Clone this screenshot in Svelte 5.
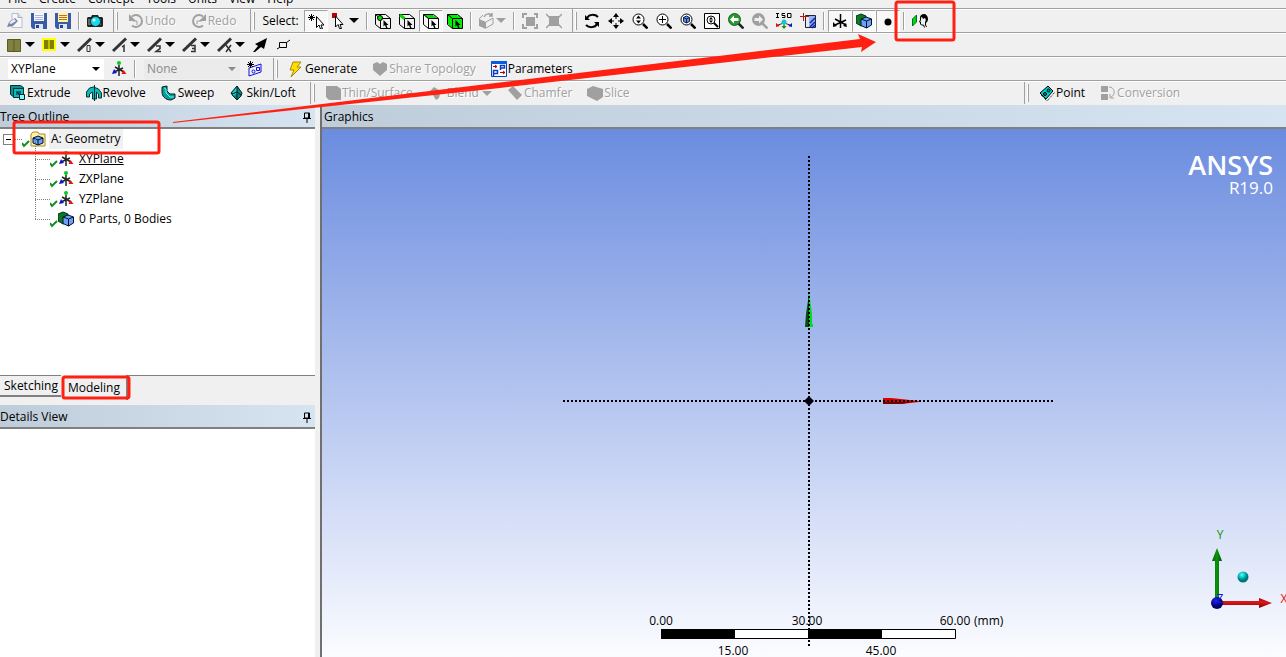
<script lang="ts">
	type Tool = {
		icon?: string;
		label?: string;
		title?: string;
		disabled?: boolean;
		pressed?: boolean;
		menu?: boolean;
		sep?: boolean;
	};

	const menus = ['File', 'Create', 'Concept', 'Tools', 'Units', 'View', 'Help'];
	const sep: Tool = { sep: true };

	const fileTools: Tool[] = [
		{ icon: 'newSketch', title: 'New' },
		{ icon: 'save', title: 'Save' },
		{ icon: 'saveAs', title: 'Save As' },
		sep,
		{ icon: 'camera', title: 'Capture image' }
	];
	const historyTools: Tool[] = [
		{ icon: 'undo', label: 'Undo', disabled: true },
		{ icon: 'redo', label: 'Redo', disabled: true }
	];
	const selectTools: Tool[] = [
		{ icon: 'pick', title: 'New selection', pressed: true },
		{ icon: 'pickMode', title: 'Select mode', menu: true },
		sep,
		{ icon: 'vertex', title: 'Points' },
		{ icon: 'edge', title: 'Edges' },
		{ icon: 'face', title: 'Faces', pressed: true },
		{ icon: 'body', title: 'Bodies' },
		sep,
		{ icon: 'extend', title: 'Extend selection', menu: true, disabled: true },
		sep,
		{ icon: 'expand', title: 'Expand', disabled: true },
		{ icon: 'shrink', title: 'Shrink', disabled: true }
	];
	const viewTools: Tool[] = [
		{ icon: 'rotate', title: 'Rotate' },
		{ icon: 'pan', title: 'Pan' },
		{ icon: 'zoom', title: 'Zoom' },
		{ icon: 'zoomIn', title: 'Box zoom' },
		{ icon: 'zoomFit', title: 'Zoom to fit' },
		{ icon: 'magnifier', title: 'Magnifier window' },
		{ icon: 'prevView', title: 'Previous view' },
		{ icon: 'nextView', title: 'Next view', disabled: true },
		{ icon: 'iso', title: 'Isometric view' },
		{ icon: 'section', title: 'New section plane' },
		sep,
		{ icon: 'triad', title: 'Display plane', pressed: true },
		{ icon: 'bodies', title: 'Display model', pressed: true },
		{ icon: 'dot', title: 'Display points', pressed: true },
		sep,
		{ icon: 'lookAt', title: 'Look at' }
	];
	const edgeTools: Tool[] = [
		{ icon: 'olive', title: 'Face coloring', menu: true },
		{ icon: 'yellow', title: 'Edge coloring', menu: true },
		...['0', '1', '2', '3', 'x'].map((n) => ({
			icon: 'edge' + n,
			title: `Edge connections ${n}`,
			menu: true
		})),
		{ icon: 'bigArrow', title: 'Edge direction' },
		{ icon: 'vertices', title: 'Display vertices' }
	];
	const generateTools: Tool[] = [
		{ icon: 'bolt', label: 'Generate' },
		{ icon: 'share', label: 'Share Topology', disabled: true },
		{ icon: 'params', label: 'Parameters' }
	];
	const createTools: Tool[] = [
		{ icon: 'extrude', label: 'Extrude' },
		{ icon: 'revolve', label: 'Revolve' },
		{ icon: 'sweep', label: 'Sweep' },
		{ icon: 'loft', label: 'Skin/Loft' }
	];
	const modifyTools: Tool[] = [
		{ icon: 'thin', label: 'Thin/Surface', disabled: true },
		{ icon: 'blend', label: 'Blend', disabled: true, menu: true },
		{ icon: 'chamfer', label: 'Chamfer', disabled: true },
		{ icon: 'slice', label: 'Slice', disabled: true }
	];
	const pointTools: Tool[] = [
		{ icon: 'point', label: 'Point' },
		{ icon: 'convert', label: 'Conversion', disabled: true }
	];
	const planes = ['XYPlane', 'ZXPlane', 'YZPlane'];

	// shared pieces of the 16x16 icons
	const cube = '<path d="M.5 1.500h10l5 4v10h-10l-5-4zM.5 1.500l5 4h10M5.500 5.500v10" fill="none" stroke="#000"/>';
	const cursor = '<path d="M8.500 7v6.500l1.500-1.500 1 3h1.500l-1-3h2z" fill="#000"/>';
	const lens =
		'<circle cx="6.500" cy="6.500" r="5.500" fill="#fff" stroke="#000"/><path d="M11 11l4.500 4.500" stroke="#000" stroke-width="2.500"/>';
	const edgeLine = '<path d="M1 14L14 1.500" stroke="#333" stroke-width="3"/>';
	const axes =
		'<path d="M8 4v11M3 11l9-4M4 6l9 5" stroke="#222" stroke-width="1.500"/><circle cx="8" cy="2" r="2" fill="#0c2"/><path d="M1 13l2-5 3 4z" fill="#11d"/><path d="M15.500 13l-5 0 2-4z" fill="#e11"/>';
	const blueBodies =
		'<path d="M0 3l5-2 5 2v8l-5 2-5-3z" fill="#0a7a1c" stroke="#032"/><path d="M5 6l5-2 5.500 2v6l-5 3L5 12.500z" fill="#6da1f5" stroke="#013"/><path d="M5 6l5.500 2 5-2M10.500 8v7" fill="none" stroke="#013"/>';

	const icons: Record<string, string> = {
		newSketch:
			'<path d="M5 .500h6l4 4v10H5z" fill="#f8f8fb" stroke="#b9bdc8"/><path d="M11 .500v4h4" fill="#dde" stroke="#aab"/><path d="M0 14l2-5 6-4 3 3-5 5z" fill="#7b86a6"/><path d="M2 10l5-4 2 2-5 3z" fill="#eef"/>',
		save: '<path d="M0 0h16v16H2l-2-2z" fill="#3a5ba8"/><path d="M3 0h10v8H3z" fill="#f6f8fc"/><path d="M4 2.500h8M4 4.500h8M4 6.500h8" stroke="#a9b8da"/><path d="M4 11h8v5H4z" fill="#dfe6f3"/><path d="M5 12h3v3H5z" fill="#26448c"/>',
		saveAs:
			'<path d="M0 0h16v16H2l-2-2z" fill="#3a5ba8"/><path d="M3 0h10v9H3z" fill="#fff1a0"/><path d="M4 2.500h8M4 4.500h8M4 6.500h8" stroke="#b9702c"/><path d="M4 11h8v5H4z" fill="#dfe6f3"/><path d="M5 12h3v3H5z" fill="#26448c"/>',
		camera:
			'<path d="M1 4h3l1-2h6l1 2h3l1 1v8l-1 1H1l-1-1V5z" fill="#222"/><path d="M2 6v6M4 6v6M13 6v6" stroke="#aaa"/><circle cx="8.500" cy="8.500" r="5" fill="#1bd9ea" stroke="#033"/><circle cx="7" cy="7" r="1.500" fill="#dff"/>',
		undo: '<path d="M4 3.500a6 6 0 1 1 0 9" fill="none" stroke="#a0a0a0" stroke-width="2"/><path d="M1 1v7h7z" fill="#a0a0a0"/><path d="M5 8h4v4" fill="none" stroke="#a0a0a0"/>',
		redo: '<path d="M12 3.500a6 6 0 1 0 0 9" fill="none" stroke="#a0a0a0" stroke-width="2"/><path d="M15 1v7H8z" fill="#a0a0a0"/><path d="M6 11V8h5" fill="none" stroke="#a0a0a0"/>',
		pick: '<path d="M3.500 1v7M0 4.500h7M1 2l5 5M6 2L1 7" stroke="#000"/><path d="M8.500 3.500v11l2.500-2.500 1.500 4h2l-1.500-4h3z" fill="#fff" stroke="#000"/>',
		pickMode:
			'<path d="M1 0h5v5H1z" fill="#b00"/><path d="M4.500 3v11L7 11.500 8.500 15.500h2L9 11.500h3z" fill="#fff" stroke="#000"/>',
		vertex: cube + '<circle cx="5" cy="5" r="2.500" fill="#0d0" stroke="#000"/>' + cursor,
		edge: cube + '<path d="M1 2l4.500 3.500" stroke="#0d0" stroke-width="3"/>' + cursor,
		face: '<path d="M1 2h9l5 4H5z" fill="#0d0"/>' + cube + cursor,
		body: '<path d="M1 2h9l6 4v9H5l-4-4z" fill="#0e0"/>' + cube + cursor,
		extend:
			'<path d="M1 6l7 3v7l-7-3z" fill="#a0a0a0"/><path d="M1 6l4-4M8 9l7-4v6l-7 4" fill="none" stroke="#a0a0a0"/><path d="M6 4c2-4 6-4 8-1M14 0v3h-3" fill="none" stroke="#a0a0a0" stroke-width="1.500"/>',
		expand:
			'<path d="M4 4h9v9H4z" fill="#a0a0a0"/><path d="M1 5V1h4M12 1h3v4M15 11v4h-3M5 15H1v-4" fill="none" stroke="#a0a0a0" stroke-width="2"/>',
		shrink:
			'<path d="M3 3h10v10H3z" fill="#a0a0a0"/><path d="M0 1l4 4M16 1l-4 4M0 15l4-4M16 15l-4-4" stroke="#a0a0a0" stroke-width="1.500"/>',
		rotate:
			'<path d="M3 5c2-4 8-4 11-1M13 11c-2 4-8 4-11 1" fill="none" stroke="#000" stroke-width="2"/><path d="M1 2v5h5zM15 14V9h-5z" fill="#000"/>',
		pan: '<path d="M8 0l3 4H5zM8 16l3-4H5zM0 8l4-3v6zM16 8l-4-3v6z" fill="#000"/><path d="M8 3v3M8 10v3M3 8h3M10 8h3" stroke="#000"/>',
		zoom: lens + '<path d="M6.500 2.500l2.500 3H4zM6.500 10.500L9 7.500H4z" fill="#000"/>',
		zoomIn: lens + '<path d="M6.500 3v7M3 6.500h7" stroke="#000"/>',
		zoomFit:
			lens + '<path d="M3.500 4.500l3-1.500 3 1.500v4l-3 1.500-3-1.500z" fill="#5b8ef0" stroke="#124"/><path d="M3.500 4.500l3 1.500 3-1.500M6.500 6v4" fill="none" stroke="#124"/>',
		magnifier:
			'<path d="M.5.500h15v15H.500z" fill="#fff" stroke="#000"/><circle cx="7" cy="7" r="4" fill="none" stroke="#000"/><path d="M10 10l4 4" stroke="#000" stroke-width="2"/><path d="M7 4l2 2.500H5zM7 10l2-2.500H5z" fill="#000"/>',
		prevView:
			'<path d="M10 10l5.500 5.500" stroke="#222" stroke-width="2.500"/><circle cx="6.500" cy="6.500" r="6" fill="#27962f" stroke="#17661f"/><path d="M2 6.500l4-4V5h4.500v3H6v2.500z" fill="#fff"/>',
		nextView:
			'<path d="M10 10l5.500 5.500" stroke="#a0a0a0" stroke-width="2.500"/><circle cx="6.500" cy="6.500" r="6.500" fill="#a0a0a0"/><path d="M11 6.500l-4-4V5H2.500v3H7v2.500z" fill="#f0f0f0"/>',
		iso: '<path d="M1.500 0v5M0 .500h3M0 4.500h3M9 .500H6v2h3v2H6M11.500.500h3.500v4h-3.500z" fill="none" stroke="#000"/><path d="M8 8v6M8 10l-6 2M8 10l6 2" stroke="#333"/><circle cx="8" cy="9" r="2.500" fill="#19c3cf"/><path d="M0 10v4l4-1z" fill="#d11"/><path d="M16 10v4l-4-1z" fill="#11d"/><path d="M5.500 13h5L8 16z" fill="#090"/>',
		section:
			'<path d="M5.500 2.500h10v12h-10z" fill="#8fb3f5" stroke="#223"/><path d="M6 14V3h3v11z" fill="#e8e8e8"/><path d="M10 14l5-5M10 10l5-5M12 15l3-3" stroke="#12b" stroke-width="1.500"/><path d="M3.500 0v8M0 3.500h9" stroke="#b11"/>',
		triad: '<path d="M8.500 1v14M3 12l11-5M3 6l11 6" stroke="#000" stroke-width="1.500"/><path d="M1 14V9l4 4zM15 14l-4-1 3-3z" fill="#000"/>',
		bodies: blueBodies,
		dot: '<circle cx="8" cy="9" r="3.500" fill="#000"/>',
		lookAt:
			'<path d="M.5 6l4-4v7l-4 4z" fill="#0d0" stroke="#063"/><path d="M8 5c0-3 2-4 4-4s4 2 4 5c0 2-1 3-2 4l-1-1c1-1 1-3 0-4l-2 1-1-2z" fill="#000"/><path d="M8.500 4v3l-1 2h1v2l1 1h2l1 2.500M13.500 9v3l1 2" fill="none" stroke="#000"/>',
		olive:
			'<path d="M.5 2.500h13v12H.500z" fill="#808040" stroke="#5a5a1e"/><path d="M7 3v11" stroke="#5a5a1e"/>',
		yellow:
			'<path d="M1 2h12v11H1z" fill="#808000" stroke="#ff0" stroke-width="2"/><path d="M7 2v11" stroke="#ff0"/>',
		edge0: edgeLine + '<path d="M10 8.500h3v6h-3z" fill="#f0f0f0" stroke="#333"/>',
		edge1: edgeLine + '<path d="M10 10l2-1.500V15" fill="none" stroke="#333" stroke-width="1.500"/>',
		edge2: edgeLine + '<path d="M9 9h4v2.500l-4 3h5" fill="none" stroke="#333" stroke-width="1.500"/>',
		edge3: edgeLine + '<path d="M9 8.500h4v3h-3 3v3H9" fill="none" stroke="#333" stroke-width="1.500"/>',
		edgex: edgeLine + '<path d="M9 8l5 7M14 8l-5 7" stroke="#333" stroke-width="1.500"/>',
		bigArrow: '<path d="M1 15l5-6-3-2L15 1l-3 11-3-2-6 5z" fill="#000"/>',
		vertices:
			'<path d="M3.500 5.500h7v5h-7zM10.500 5.500L14 3M3.500 10.500L1 12" fill="none" stroke="#000"/>',
		axes,
		newPlane:
			'<path d="M2 7l12-4v8L2 15z" fill="none" stroke="#11d"/><circle cx="6.500" cy="10.500" r="1.500" fill="none" stroke="#11d"/><path d="M9.500 6.500h3v3h-3z" fill="none" stroke="#11d"/><path d="M3.500 0v7M0 3.500h7M1 1l5 5M6 1L1 6" stroke="#000"/>',
		bolt: '<path d="M5 1h8L9 6h4L3 16l3-7H2z" fill="#fd0" stroke="#a80"/>',
		share: '<path d="M8 15L1 9V3l4-2 3 2 3-2 4 2v6z" fill="#a0a0a0"/>',
		params:
			'<path d="M.5.500h15v15H.500z" fill="#fff" stroke="#0645b8"/><path d="M0 0h16v3H0z" fill="#0b5be0"/><path d="M2 5.500h4M4 4l2 1.500L4 7M9 11.500h5M12 10l2 1.500L12 13" fill="none" stroke="#b00"/><path d="M9.500 9V4.500h4v2.500h-4M2.500 15V9.500h4v3h-4" fill="none" stroke="#0a3cc8" stroke-width="1.500"/>',
		extrude:
			'<path d="M.5.500h10l3 2v10h-9l-4-3z" fill="#0b8f8f" stroke="#033"/><path d="M3.500 3.500h10v9h-10z" fill="#0cbcbc" stroke="#033"/><path d="M6 6h5v4H6z" fill="#067"/><path d="M9.500 9.500h5v5h-5zM9 9L7 7" fill="#7ff" stroke="#022"/>',
		revolve:
			'<path d="M.5 12V7l3-4 4-1 5 2 3 4v5h-3V9l-2-2v7h-4V7l-3 2v3z" fill="#0cbcbc" stroke="#033"/><path d="M8.500 0v16" stroke="#033"/>',
		sweep:
			'<path d="M1 2l5-1v5l3 3h5v4l-4 2c-6 0-9-4-9-8z" fill="#0b9c94" stroke="#022"/><path d="M3 3l2 1v4l4 4h4" fill="none" stroke="#5ff"/>',
		loft: '<path d="M8 1l5 7-1 3-4 4-4-4-2-3z" fill="#0b857f" stroke="#022"/><path d="M8 2v6l-3 3-2-3z" fill="#2cc"/><path d="M8 1v13M3 9l5-2 4 3" fill="none" stroke="#022"/>',
		thin: '<path d="M1 1h11l4 3v11H4l-3-3z" fill="#a0a0a0"/>',
		blend: '<path d="M1 7l5-5 8 5-2 2-1 4-3 2-3-5z" fill="#a0a0a0"/>',
		chamfer: '<path d="M1 5l5-4 9 9-5 5z" fill="#a0a0a0"/>',
		slice: '<path d="M0 4l6-3 10 3v8l-6 4-10-5z" fill="#a0a0a0"/>',
		point:
			'<path d="M1 8l8-7 5 5-7 8z" fill="#0cc" stroke="#000"/><path d="M2 10l6 6 8-9" fill="none" stroke="#000" stroke-dasharray="1 1"/><circle cx="6" cy="9" r="1.500" stroke="#000" fill="#099"/><circle cx="9.500" cy="5.500" r="1.500" stroke="#000" fill="#099"/>',
		convert:
			'<path d="M1 1h7v6H1zM1 9h7v6H1z" fill="#a0a0a0"/><path d="M9 2c6 0 7 8 2 10M10 9v4h4" fill="none" stroke="#a0a0a0"/>',
		folder:
			'<path d="M1 3l2-2h5l1 2h6v12H1z" fill="#fff2a8" stroke="#a88a20"/><path d="M3 7l5-2 5 2v5l-5 2-5-2z" fill="#6da1f5" stroke="#013"/><path d="M3 7l5 2 5-2M8 9v5" fill="none" stroke="#013"/>',
		pin: '<path d="M5.500 4v5h5V4zM4 9.500h8M8 10v4" fill="none" stroke="#000"/><path d="M9 4v5h2V4z" fill="#000"/>',
		check: '<path d="M0 10l2 3 5-5" fill="none" stroke="#109020" stroke-width="2"/>'
	};

	let plane = $state('XYPlane');
	let sketch = $state('None');
	let tab = $state('Modeling');
	let current = $state('A: Geometry');
</script>

{#snippet icon(name: string)}
	<svg class="icon" viewBox="0 0 16 16" aria-hidden="true">{@html icons[name]}</svg>
{/snippet}

{#snippet tools(list: Tool[])}
	{#each list as t}
		{#if t.sep}
			<span class="sep"></span>
		{:else}
			<button
				type="button"
				class="tool"
				class:drop={t.menu}
				class:wide={t.label}
				class:pressed={t.pressed}
				disabled={t.disabled}
				title={t.title}
				aria-label={t.label ? undefined : t.title}
			>
				{@render icon(t.icon ?? '')}
				{#if t.label}<span>{t.label}</span>{/if}
				{#if t.menu}<i class="caret"></i>{/if}
			</button>
		{/if}
	{/each}
{/snippet}

<div class="app">
	<nav class="menubar">
		{#each menus as m}
			<button type="button">{m}</button>
		{/each}
	</nav>

	<div class="row">
		<div class="group first">{@render tools(fileTools)}</div>
		<div class="group">{@render tools(historyTools)}</div>
		<div class="group">
			<span class="caption">Select:</span>
			{@render tools(selectTools)}
		</div>
		<div class="group last">{@render tools(viewTools)}</div>
	</div>
	<div class="row">
		<div class="group first last">{@render tools(edgeTools)}</div>
	</div>
	<div class="row low">
		<div class="group first">
			<label class="combo">
				<select bind:value={plane} aria-label="Active plane">
					{#each planes as p}<option>{p}</option>{/each}
				</select>
				<i class="caret"></i>
			</label>
			{@render tools([{ icon: 'axes', title: 'New plane' }, sep])}
			<label class="combo off">
				<select bind:value={sketch} disabled aria-label="Active sketch">
					<option>None</option>
				</select>
				<i class="caret"></i>
			</label>
			{@render tools([{ icon: 'newPlane', title: 'New sketch' }])}
		</div>
		<div class="group last">{@render tools(generateTools)}</div>
	</div>
	<div class="row low">
		<div class="group first">{@render tools(createTools)}</div>
		<div class="group stretch">{@render tools(modifyTools)}</div>
		<div class="group last points">{@render tools(pointTools)}</div>
	</div>

	<main>
		<aside>
			<header class="bar">
				<h2>Tree Outline</h2>
				<button type="button" aria-label="Pin tree outline">{@render icon('pin')}</button>
			</header>
			<div class="tree">
				<div class="node root">
					<span class="toggle"></span>
					<span class="stub"></span>
					<span class="check">{@render icon('check')}</span>
					{@render icon('folder')}
					<button
						type="button"
						class:current={current === 'A: Geometry'}
						onclick={() => (current = 'A: Geometry')}>A: Geometry</button
					>
				</div>
				<ul>
					{#each [...planes, '0 Parts, 0 Bodies'] as name, i}
						<li class="node">
							<span class="stub"></span>
							<span class="check">{@render icon('check')}</span>
							{@render icon(i < 3 ? 'axes' : 'bodies')}
							<button
								type="button"
								class:active={name === plane}
								class:current={current === name}
								onclick={() => (current = name)}>{name}</button
							>
						</li>
					{/each}
				</ul>
			</div>
			<div class="tabs">
				{#each ['Sketching', 'Modeling'] as t}
					<button type="button" class:on={tab === t} onclick={() => (tab = t)}>{t}</button>
				{/each}
				<span class="rest"></span>
			</div>
			<header class="bar">
				<h2>Details View</h2>
				<button type="button" aria-label="Pin details view">{@render icon('pin')}</button>
			</header>
			<div class="details"></div>
		</aside>

		<section class="graphics">
			<header class="bar"><h2>Graphics</h2></header>
			<div class="scene">
				<svg class="axes" viewBox="0 0 492 492" width="492" height="492">
					<path d="M243 171h7v-3h-1v-10l-3-22z" fill="#0d2" />
					<path d="M242 171h4v-33l-3 20z" fill="#074d10" />
					<path d="M320 242h8l10 1 18 2v1l-18 2h-18z" fill="#d00" />
					<path d="M320 246h30l-12 2h-18z" fill="#700" />
					<path d="M246 0v492M0 245h492" stroke="#000" stroke-width="2" stroke-dasharray="2 2" />
					<path d="M246 240l5 5-5 5-5-5z" fill="#001" />
				</svg>

				<div class="brand">
					<strong>ANSYS</strong>
					<span>R19.0</span>
				</div>

				<svg class="ruler" viewBox="0 0 360 44" width="360" height="44">
					<path d="M13.500 16.500h294v9h-294z" fill="#fff" stroke="#000" />
					<path d="M13 16h74v10H13zM160 16h74v10h-74z" />
					<text x="13" y="12">0.00</text>
					<text x="159" y="12">30.00</text>
					<text x="307" y="12">60.00</text>
					<text class="unit" x="326" y="12">(mm)</text>
					<text x="85" y="42">15.00</text>
					<text x="233" y="42">45.00</text>
				</svg>

				<svg class="triad" viewBox="0 0 80 90" width="80" height="90">
					<defs>
						<linearGradient id="gy"><stop stop-color="#0a5c0a" /><stop offset="0.5" stop-color="#0a970a" /><stop offset="1" stop-color="#064806" /></linearGradient>
						<linearGradient id="rx" x2="0" y2="1"><stop stop-color="#900" /><stop offset="0.4" stop-color="#e21818" /><stop offset="1" stop-color="#700" /></linearGradient>
						<radialGradient id="cy" cx="0.4" cy="0.3"><stop stop-color="#5ff" /><stop offset="0.6" stop-color="#0bb" /><stop offset="1" stop-color="#077" /></radialGradient>
						<radialGradient id="bz" cx="0.4" cy="0.3"><stop stop-color="#22f" /><stop offset="1" stop-color="#006" /></radialGradient>
					</defs>
					<path d="M9 76V31H6l5-13 5 13h-3v45z" fill="url(#gy)" />
					<path d="M11 71h42v-3l13 5-13 5v-3H11z" fill="url(#rx)" />
					<circle cx="11" cy="73" r="6" fill="url(#bz)" />
					<circle cx="37" cy="47" r="5.500" fill="url(#cy)" />
					<text x="14" y="9" fill="#0a970a">Y</text>
					<text x="14" y="73" fill="#11e">Z</text>
					<text x="78" y="73" fill="#e11">X</text>
				</svg>
			</div>
		</section>
	</main>

	<svg class="notes" aria-hidden="true">
		<rect x="896" y="2" width="58" height="38" rx="2" />
		<rect x="14" y="122" width="145" height="31" rx="2" />
		<rect x="63" y="377" width="66" height="21" rx="2" />
		<path d="M173 122L860 39L858 34L876 42L861 52L862 47L500 88L173 123z" />
	</svg>
</div>

<style>
	:global(body) {
		background: #f0f0f0;
	}
	.app {
		position: relative;
		display: flex;
		flex-direction: column;
		min-height: 100vh;
		overflow: hidden;
		font: 12px/16px 'Open Sans', 'Noto Sans', sans-serif;
		color: #000;
		background: #f0f0f0;
	}
	button,
	select {
		font: inherit;
		color: inherit;
		background: none;
		border: 0;
		margin: 0;
		padding: 0;
	}
	.icon {
		flex: none;
		width: 16px;
		height: 16px;
	}

	.menubar {
		display: flex;
		align-items: flex-end;
		gap: 12px;
		height: 8px;
		padding-left: 8px;
		overflow: hidden;
	}
	.menubar button {
		flex: none;
		line-height: 18px;
		white-space: nowrap;
	}

	.row {
		display: flex;
		height: 24px;
		box-sizing: border-box;
		border-top: 1px solid #a0a0a0;
		box-shadow: inset 0 1px #fff;
		white-space: nowrap;
	}
	.row.low {
		padding-top: 1px;
	}
	.group {
		display: flex;
		align-items: center;
		padding-right: 6px;
		border-right: 1px solid #a0a0a0;
	}
	.group::before {
		content: '';
		width: 2px;
		height: 18px;
		margin: 0 3px 0 2px;
		border-right: 1px solid #a0a0a0;
		border-left: 1px solid #fff;
		box-sizing: border-box;
	}
	.group.first::before {
		visibility: hidden;
		width: 0;
		margin: 0 1px 0 0;
	}
	.group.last {
		border-right: 0;
	}
	.group.stretch {
		flex: 1;
	}
	.group.points {
		flex: 0 1 255px;
	}
	.caption {
		padding: 0 5px 0 4px;
	}
	.sep {
		width: 2px;
		height: 18px;
		margin: 0 3px;
		box-sizing: border-box;
		border-left: 1px solid #a0a0a0;
		border-right: 1px solid #fff;
	}
	.tool {
		display: flex;
		align-items: center;
		justify-content: center;
		gap: 1px;
		width: 24px;
		height: 22px;
		box-sizing: border-box;
	}
	.tool.drop {
		width: 35px;
		gap: 2px;
	}
	.tool.wide {
		width: auto;
		padding: 0 8px 0 7px;
	}
	.tool.wide.drop {
		gap: 3px;
	}
	.tool.pressed {
		border: 1px solid;
		border-color: #a0a0a0 #fff #fff #a0a0a0;
		background: #f8f8f8;
	}
	.tool:disabled {
		color: #a0a0a0;
		text-shadow: 1px 1px #fff;
	}
	.caret {
		border: 5px solid transparent;
		border-top-color: currentColor;
		border-bottom: 0;
	}

	.combo {
		display: flex;
		align-items: center;
		width: 96px;
		height: 20px;
		margin: 0 3px 0 5px;
		padding: 0 4px 0 3px;
		box-sizing: border-box;
		background: #fff;
	}
	.combo.off {
		color: #8a8a8a;
		background: #ebebeb;
	}
	.combo select {
		flex: 1;
		min-width: 0;
		appearance: none;
		opacity: 1;
	}
	.combo .caret {
		border-width: 4px;
		border-bottom: 0;
		pointer-events: none;
	}

	main {
		flex: 1;
		display: flex;
		margin-top: 1px;
	}
	aside {
		display: flex;
		flex-direction: column;
		width: 315px;
		margin-right: 5px;
	}
	.bar {
		display: flex;
		align-items: center;
		justify-content: space-between;
		height: 24px;
		padding-top: 1px;
		box-sizing: border-box;
		border-bottom: 2px solid #808080;
		background: linear-gradient(90deg, #bfcddb, #d6e4f1);
	}
	.bar h2 {
		margin: 0;
		font: inherit;
	}
	.bar button {
		display: flex;
	}

	.tree {
		height: 246px;
		background: #fff;
	}
	.tree ul {
		margin: 0 0 0 35px;
		padding: 0;
		list-style: none;
	}
	.node {
		position: relative;
		display: flex;
		align-items: center;
		height: 20px;
	}
	.node button {
		height: 20px;
		padding: 0 2px;
		margin-left: 3px;
	}
	.node button.current {
		background: #f0f0f0;
	}
	.node button.active {
		text-decoration: underline;
	}
	.node.root {
		padding-left: 3px;
	}
	.toggle {
		width: 11px;
		height: 11px;
		box-sizing: border-box;
		border: 1px solid #808080;
		background: linear-gradient(#000, #000) center / 5px 1px no-repeat;
	}
	.stub {
		width: 15px;
		border-top: 1px dotted #808080;
	}
	.root .stub {
		width: 8px;
	}
	.check {
		display: flex;
		width: 8px;
		padding-top: 4px;
	}
	.tree li::before {
		content: '';
		position: absolute;
		left: 0;
		top: -10px;
		height: 20px;
		border-left: 1px dotted #808080;
	}

	.tabs {
		display: flex;
		height: 25px;
		margin-bottom: 5px;
	}
	.tabs button {
		height: 22px;
		padding: 0 3px 0 4px;
		box-sizing: border-box;
		border-top: 1px solid #808080;
		border-bottom: 2px solid #808080;
	}
	.tabs button.on {
		height: 25px;
		padding: 0 6px 0 7px;
		border-top: 0;
		border-bottom: 0;
		border-right: 2px solid #808080;
	}
	.tabs .rest {
		flex: 1;
		border-top: 1px solid #808080;
	}
	.details {
		flex: 1;
		background: #fff;
	}

	.graphics {
		flex: 1;
		display: flex;
		flex-direction: column;
		min-width: 0;
		border-left: 2px solid #707070;
	}
	.graphics .bar {
		padding-left: 2px;
	}
	.scene {
		position: relative;
		flex: 1;
		overflow: hidden;
		background: linear-gradient(#6b8cdf, #fbfcff);
	}
	.scene svg {
		position: absolute;
	}
	.scene .axes {
		left: calc(50% - 241px);
		bottom: 9px;
	}
	.brand {
		position: absolute;
		top: 21px;
		right: 13px;
		display: flex;
		flex-direction: column;
		align-items: flex-end;
		color: #fff;
	}
	.brand strong {
		font-size: 27px;
		line-height: 30px;
		font-weight: 600;
	}
	.brand span {
		font-size: 17px;
		line-height: 16px;
	}
	.ruler {
		left: calc(50% - 156px);
		bottom: 0;
	}
	.scene text {
		font-size: 12px;
		text-anchor: middle;
	}
	.ruler .unit {
		text-anchor: start;
	}
	.scene .triad {
		right: 0;
		bottom: 37px;
	}
	.triad text {
		font-size: 12px;
	}

	.notes {
		position: absolute;
		inset: 0;
		width: 100%;
		height: 100%;
		pointer-events: none;
		fill: #ff2012;
	}
	.notes rect {
		fill: none;
		stroke: #ff2012;
		stroke-width: 3;
	}
</style>
